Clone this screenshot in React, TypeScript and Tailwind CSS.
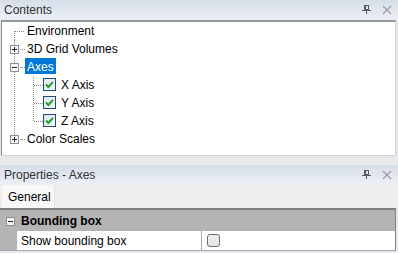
import React from 'react';

type Kind = 'first' | 'mid' | 'last';

const PinIcon = () => (
  <svg width="10" height="10" viewBox="0 0 10 10" className="block">
    <rect x="2.5" y="0.5" width="4" height="4" fill="none" stroke="#5a5a5a" />
    <rect x="2" y="0" width="2" height="5" fill="#5a5a5a" />
    <rect x="0" y="5" width="9" height="1" fill="#5a5a5a" />
    <rect x="4" y="6" width="1" height="3" fill="#5a5a5a" />
  </svg>
);

const CloseIcon = () => (
  <svg width="10" height="10" viewBox="0 0 10 10" className="block">
    <path d="M1 1 L9 9 M9 1 L1 9" stroke="#9a9a9a" strokeWidth="1.1" />
  </svg>
);

const TitleBar: React.FC<{ title: string }> = ({ title }) => (
  <div className="h-[20px] shrink-0 flex items-center justify-between pl-[4px] pr-[6px] bg-gradient-to-b from-[#d7dee8] to-[#ecf0f6] text-[#333333] text-[12px]">
    <span className="leading-[21px]">{title}</span>
    <div className="flex items-center gap-[10px]">
      <PinIcon />
      <CloseIcon />
    </div>
  </div>
);

// expander box, drawn inside a gutter svg
const Expander: React.FC<{ open: boolean }> = ({ open }) => (
  <g>
    <rect x="8.5" y="5.5" width="8" height="8" fill="#f6f6f6" stroke="#8e8e8e" />
    <path d="M10 9.5 H15" stroke="#1c2a44" />
    {!open && <path d="M12.5 7 V12" stroke="#1c2a44" />}
  </g>
);

const dots = { stroke: '#8a8a8a', strokeDasharray: '1 1' };

const RootGutter: React.FC<{ kind: Kind; box?: 'open' | 'closed' }> = ({ kind, box }) => {
  const top = kind === 'first' ? 9 : 0;
  const bottom = kind === 'last' ? 9 : 18;
  return (
    <svg width="23" height="18" className="block shrink-0">
      {box ? (
        <>
          {top < 5 && <line x1="12.5" y1={top} x2="12.5" y2="5" {...dots} />}
          {bottom > 14 && <line x1="12.5" y1="14" x2="12.5" y2={bottom} {...dots} />}
          <line x1="18" y1="9.5" x2="23" y2="9.5" {...dots} />
          <Expander open={box === 'open'} />
        </>
      ) : (
        <>
          <line x1="12.5" y1={top} x2="12.5" y2={bottom} {...dots} />
          <line x1="13" y1="9.5" x2="23" y2="9.5" {...dots} />
        </>
      )}
    </svg>
  );
};

const ChildGutter: React.FC<{ last: boolean }> = ({ last }) => (
  <svg width="41" height="18" className="block shrink-0">
    <line x1="12.5" y1="0" x2="12.5" y2="18" {...dots} />
    <line x1="31.5" y1="0" x2="31.5" y2={last ? 9 : 18} {...dots} />
    <line x1="32" y1="9.5" x2="41" y2="9.5" {...dots} />
  </svg>
);

const TreeCheck = () => (
  <svg width="13" height="13" viewBox="0 0 13 13" className="block shrink-0 mt-[2px]">
    <defs>
      <linearGradient id="cbg" x1="0" y1="0" x2="1" y2="1">
        <stop offset="0" stopColor="#dfe6ee" />
        <stop offset="1" stopColor="#f7f9fb" />
      </linearGradient>
    </defs>
    <rect x="0.5" y="0.5" width="12" height="12" fill="url(#cbg)" stroke="#1f4d73" />
    <path d="M3 6.5 L5.4 9 L10 3.8" fill="none" stroke="#21a32a" strokeWidth="2" />
  </svg>
);

const Label: React.FC<{ text: string; selected?: boolean }> = ({ text, selected }) => (
  <span
    className={`h-[16px] leading-[18px] px-[2px] whitespace-nowrap text-[12px] ${
      selected ? 'bg-[#0078d7] text-white' : 'text-black'
    }`}
  >
    {text}
  </span>
);

export default function App() {
  return (
    <div className="w-[398px] h-[253px] overflow-hidden bg-[#e7e9ec] flex flex-col font-['Liberation_Sans',Arial,sans-serif]">
      <TitleBar title="Contents" />

      {/* tree */}
      <div className="h-[136px] shrink-0 ml-[1px] mr-[2px] bg-white border-t-2 border-l border-r border-b border-t-[#999999] border-l-[#8c8c8c] border-r-[#d2d2d2] border-b-[#d2d2d2] flex flex-col">
        <div className="flex h-[18px]">
          <RootGutter kind="first" />
          <Label text="Environment" />
        </div>
        <div className="flex h-[18px]">
          <RootGutter kind="mid" box="closed" />
          <Label text="3D Grid Volumes" />
        </div>
        <div className="flex h-[18px]">
          <RootGutter kind="mid" box="open" />
          <Label text="Axes" selected />
        </div>
        {['X Axis', 'Y Axis', 'Z Axis'].map((t, i) => (
          <div key={t} className="flex h-[18px]">
            <ChildGutter last={i === 2} />
            <TreeCheck />
            <span className="w-[3px]" />
            <Label text={t} />
          </div>
        ))}
        <div className="flex h-[18px]">
          <RootGutter kind="last" box="closed" />
          <Label text="Color Scales" />
        </div>
      </div>

      <div className="h-[9px] shrink-0" />
      <TitleBar title="Properties - Axes" />

      {/* tabs */}
      <div className="h-[23px] shrink-0 bg-[#eeeeee] flex">
        <div className="ml-[2px] w-[53px] h-full bg-[#f8f8f8] border-r border-[#e2e2e2] flex items-center pl-[6px] pt-[1px] text-[12px] text-black">
          General
        </div>
      </div>

      {/* property grid */}
      <div className="w-[396px] shrink-0 border-t-2 border-r border-b border-t-[#7e7e7e] border-r-[#808080] border-b-[#a9a9a9] bg-[#b4b4b4]">
        <div className="h-[21px] flex items-center">
          <svg width="9" height="9" viewBox="0 0 9 9" className="block ml-[6px] mt-[1px]">
            <rect x="0.5" y="0.5" width="8" height="8" fill="#f3f3f3" stroke="#8e8e8e" />
            <path d="M2 4.5 H7" stroke="#1c2a44" />
          </svg>
          <span className="ml-[6px] text-[12px] font-bold text-black">Bounding box</span>
        </div>
        <div className="h-[19px] flex">
          <div className="w-[17px]" />
          <div className="w-[185px] bg-white border-r border-[#a9a9a9] flex items-center pl-[4px] text-[12px] text-black">
            Show bounding box
          </div>
          <div className="flex-1 bg-white flex items-center pl-[5px]">
            <div className="w-[13px] h-[13px] rounded-[3px] border border-[#6e6e6e] bg-gradient-to-b from-[#f0f0f0] to-[#e4e4e4]" />
          </div>
        </div>
      </div>
    </div>
  );
}
